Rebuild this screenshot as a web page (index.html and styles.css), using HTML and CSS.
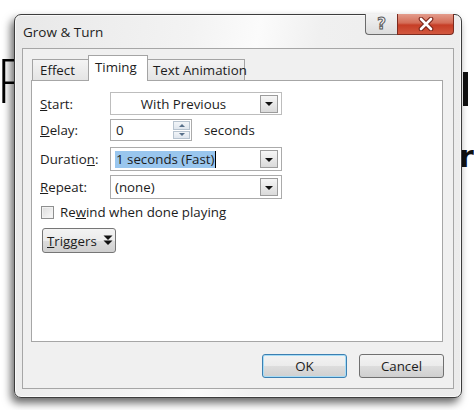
FILE: index.html
```html
<!DOCTYPE html>
<html>
<head>
<meta charset="utf-8">
<link rel="stylesheet" href="styles.css">
</head>
<body>
<div class="stage">
  <span class="bg-p">P</span>
  <span class="bg-bar"></span>
  <span class="bg-r">r</span>
  <div class="window">
    <div class="titlebar">
      <span class="title">Grow &amp; Turn</span>
      <div class="caption-btns">
        <div class="cbtn help">?</div>
        <div class="cbtn close">
          <svg width="20" height="14" viewBox="0 0 20 14">
            <path d="M5 2 L15 12 M15 2 L5 12" stroke="#7a2418" stroke-width="4.6" stroke-linecap="round"/>
            <path d="M5 2 L15 12 M15 2 L5 12" stroke="#ffffff" stroke-width="2.6" stroke-linecap="round"/>
          </svg>
        </div>
      </div>
    </div>
    <div class="client">
      <div class="tabs">
        <div class="tab t-effect">Effect</div>
        <div class="tab active">Timing</div>
        <div class="tab t-text">Text Animation</div>
      </div>
      <div class="panel">
        <div class="row r-start">
          <span class="label"><u>S</u>tart:</span>
          <div class="combo ro">
            <span class="combo-text center">With Previous</span>
            <span class="drop"><i></i></span>
          </div>
        </div>
        <div class="row r-delay">
          <span class="label"><u>D</u>elay:</span>
          <div class="spin">
            <span class="combo-text">0</span>
            <span class="spinner">
              <span class="sp up"><i></i></span>
              <span class="sp down"><i></i></span>
            </span>
          </div>
          <span class="unit">seconds</span>
        </div>
        <div class="row r-duration">
          <span class="label">Duratio<u>n</u>:</span>
          <div class="combo">
            <span class="combo-text"><span class="sel">1 seconds (Fast)</span><span class="caret"></span></span>
            <span class="drop"><i></i></span>
          </div>
        </div>
        <div class="row r-repeat">
          <span class="label"><u>R</u>epeat:</span>
          <div class="combo">
            <span class="combo-text">(none)</span>
            <span class="drop"><i></i></span>
          </div>
        </div>
        <div class="check-row">
          <span class="checkbox"></span>
          <span class="check-label">Re<u>w</u>ind when done playing</span>
        </div>
        <div class="triggers">
          <span><u>T</u>riggers</span>
          <svg width="10" height="11" viewBox="0 0 10 11">
            <path d="M0.5 0.5 L9.5 0.5 L5 5 Z" fill="#111"/>
            <path d="M0.5 5.5 L9.5 5.5 L5 10 Z" fill="#111"/>
          </svg>
        </div>
      </div>
      <div class="footer">
        <div class="btn default">OK</div>
        <div class="btn">Cancel</div>
      </div>
    </div>
  </div>
</div>
</body>
</html>
```
FILE: styles.css
```css
* { box-sizing: border-box; }
html, body { margin: 0; padding: 0; background: #fff; }
body {
  width: 474px;
  height: 410px;
  overflow: hidden;
  font-family: "Open Sans", "Noto Sans", sans-serif;
  font-size: 13.3px;
  color: #1c1c1c;
}
.stage {
  position: relative;
  width: 474px;
  height: 410px;
  padding: 14px 0 0 14px;
}
.bg-p {
  position: absolute;
  left: -5px;
  top: 52px;
  font-family: "DejaVu Sans", sans-serif;
  font-weight: 200;
  font-size: 60px;
  line-height: 60px;
  color: #000;
}
.bg-bar {
  position: absolute;
  left: 463px;
  top: 72px;
  width: 5px;
  height: 34px;
  background: #111;
}
.bg-r {
  position: absolute;
  left: 459px;
  top: 142px;
  font-family: "DejaVu Sans", sans-serif;
  font-weight: bold;
  font-size: 30px;
  line-height: 30px;
  color: #111;
}
.window {
  position: relative;
  width: 448px;
  height: 384px;
  border: 1px solid #3d3d3d;
  border-radius: 7px;
  background: linear-gradient(100deg, #e8e8e8 0%, #f3f3f3 35%, #fbfbfb 48%, #f0f0f0 60%, #ebebeb 100%);
  box-shadow: -3px 5px 9px rgba(0,0,0,0.6), 0 0 0 1px rgba(255,255,255,0.7) inset;
  padding: 0 7px 8px 7px;
  display: flex;
  flex-direction: column;
}
.titlebar {
  height: 33px;
  display: flex;
  justify-content: space-between;
  align-items: flex-start;
}
.title {
  margin-left: 1px;
  margin-top: 8px;
  font-size: 13.5px;
  color: #1e1e1e;
}
.caption-btns {
  display: flex;
  margin-top: -1px;
}
.cbtn {
  height: 21px;
  border: 1px solid #6b6b6b;
  border-top: none;
  display: flex;
  align-items: center;
  justify-content: center;
}
.help {
  width: 32px;
  border-radius: 0 0 0 4px;
  border-right: none;
  background: linear-gradient(#f3f3f3, #dcdcdc);
  font-family: "DejaVu Sans", sans-serif;
  font-weight: bold;
  font-size: 15px;
  color: #f4f4f4;
  -webkit-text-stroke: 1px #5a5a5a;
}
.close {
  width: 57px;
  border-radius: 0 0 4px 0;
  border-color: #7c2a1e;
  background: linear-gradient(#e39c8c 0%, #d46d57 45%, #c63e26 55%, #d2583f 100%);
}
.client {
  flex: 1;
  border: 1px solid #a6a6a6;
  background: #f0f0f0;
  padding: 6px 10px 0 8px;
  display: flex;
  flex-direction: column;
}
.tabs {
  display: flex;
  align-items: flex-end;
  height: 25px;
  margin-left: 1px;
  position: relative;
  z-index: 1;
}
.tab {
  flex-shrink: 0;
  white-space: nowrap;
  height: 21px;
  padding: 0 0 0 6px;
  border: 1px solid #a4a4a4;
  border-bottom: none;
  background: linear-gradient(#f4f4f4, #e4e4e4);
  display: flex;
  align-items: center;
  color: #1c1c1c;
}
.t-effect { width: 57px; padding-left: 7px; }
.tab.active {
  height: 26px;
  width: 60px;
  margin-bottom: -1px;
  background: #fff;
  margin-left: -1px;
  margin-right: -1px;
  padding-left: 6px;
  align-items: flex-start;
  padding-top: 2px;
}
.t-text { width: 98px; padding-left: 5px; }
.panel {
  height: 262px;
  background: #fff;
  border: 1px solid #a6a6a6;
  padding: 11px 8px 0 8px;
  display: flex;
  flex-direction: column;
  align-items: flex-start;
}
.row {
  display: flex;
  align-items: center;
}
.label { width: 70px; }
.r-start { height: 23px; }
.r-delay { height: 22px; margin-top: 4px; }
.r-duration { height: 24px; margin-top: 6px; }
.r-repeat { height: 24px; margin-top: 4px; }
.combo {
  width: 172px;
  height: 100%;
  border: 1px solid #ababab;
  background: #fff;
  display: flex;
  align-items: center;
  padding: 0 3px 0 4px;
}
.combo.ro { border-color: #bdbdbd; }
.combo-text {
  flex: 1;
  display: flex;
  align-items: center;
  white-space: nowrap;
}
.combo-text.center { justify-content: center; padding-right: 8px; }
.drop {
  width: 18px;
  height: 18px;
  border: 1px solid #9c9c9c;
  background: linear-gradient(#f6f6f6, #dadada);
  display: flex;
  align-items: center;
  justify-content: center;
}
.drop i {
  width: 0; height: 0;
  border-left: 4px solid transparent;
  border-right: 4px solid transparent;
  border-top: 4px solid #111;
  margin-top: 1px;
}
.sel {
  background: #99c6ee;
  padding: 0 1px;
  line-height: 17px;
}
.caret {
  width: 1px;
  height: 17px;
  background: #000;
}
.spin {
  width: 82px;
  height: 100%;
  border: 1px solid #ababab;
  background: #fff;
  display: flex;
  align-items: center;
  padding: 1px 1px 1px 5px;
}
.spinner {
  width: 17px;
  height: 100%;
  display: flex;
  flex-direction: column;
  gap: 1px;
}
.sp {
  flex: 1;
  border: 1px solid #b7c3cf;
  background: linear-gradient(#f2f5f8, #dfe6ee);
  display: flex;
  align-items: center;
  justify-content: center;
}
.sp i {
  width: 0; height: 0;
  border-left: 3px solid transparent;
  border-right: 3px solid transparent;
}
.up i { border-bottom: 3px solid #58708a; }
.down i { border-top: 3px solid #58708a; }
.unit { margin-left: 12px; }
.check-row {
  display: flex;
  align-items: center;
  margin-top: 6px;
  margin-left: 1px;
  height: 14px;
}
.checkbox {
  width: 13px;
  height: 13px;
  border: 1px solid #8e8f8f;
  background: linear-gradient(135deg, #dcdcdc, #fafafa);
  box-shadow: inset 0 0 0 1px #f2f2f2;
  margin-right: 6px;
}
.triggers {
  margin-top: 9px;
  margin-left: 2px;
  width: 74px;
  height: 25px;
  border: 1px solid #767676;
  border-radius: 3px;
  background: linear-gradient(#f3f3f3 0%, #ebebeb 50%, #dddddd 51%, #cfcfcf 100%);
  display: flex;
  align-items: center;
  padding-left: 4px;
  gap: 6px;
}
.footer {
  display: flex;
  justify-content: flex-end;
  gap: 12px;
  margin-top: 12px;
  margin-right: -1px;
}
.btn {
  width: 85px;
  height: 24px;
  border: 1px solid #707070;
  border-radius: 3px;
  background: linear-gradient(#f3f3f3 0%, #ebebeb 50%, #dddddd 51%, #cfcfcf 100%);
  display: flex;
  align-items: center;
  justify-content: center;
}
.btn.default {
  border-color: #3c7fb1;
  box-shadow: inset 0 0 0 1px #a6dcf6;
}
```
